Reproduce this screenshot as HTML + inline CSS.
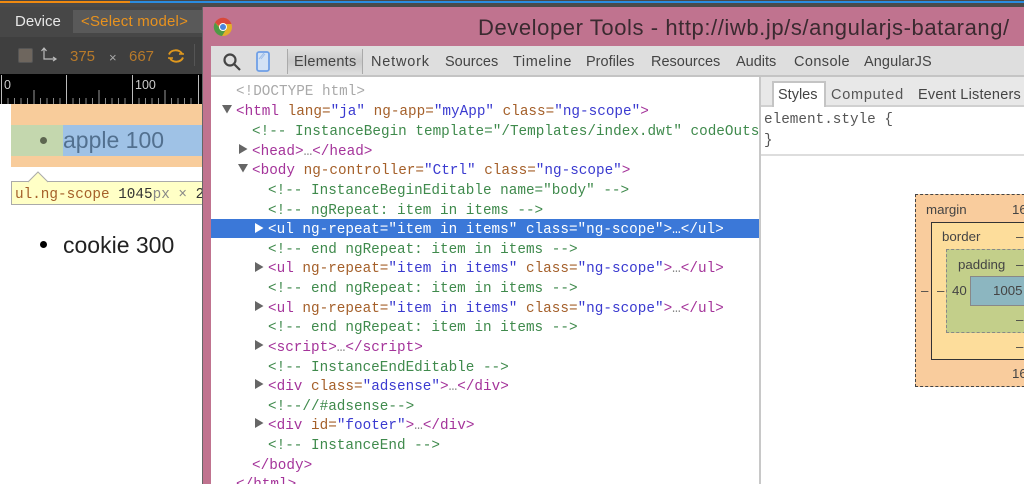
<!DOCTYPE html>
<html><head><meta charset="utf-8"><style>
html,body{margin:0;padding:0;width:1024px;height:484px;overflow:hidden;background:#fff}
body{position:relative;font-family:"Liberation Sans",sans-serif}
.a{position:absolute;white-space:pre}
.r{position:absolute;white-space:pre;font:14.33px/20px "Liberation Mono",monospace;color:#888}
.t{color:#a4339a}.n{color:#a5602a}.v{color:#3a3ad0}.c{color:#3f8a4c}.g{color:#a9a9a9}.k{color:#333}
.tab{position:absolute;top:53px;font-size:14.5px;line-height:18px;color:#444;white-space:pre}
.m{font-size:13.3px;color:#444;line-height:14px}
</style></head><body>
<div class="a" style="left:0;top:0;width:1024px;height:3px;background:#4a4a4a"></div>
<div class="a" style="left:0;top:0;width:202px;height:76px;background:#474747"></div>
<div class="a" style="left:0;top:1px;width:130px;height:2px;background:#f08a10"></div>
<div class="a" style="left:130px;top:1px;width:894px;height:2px;background:#2a8ce0"></div>
<div class="a" style="left:0;top:3px;width:1024px;height:4px;background:#4a4a4a"></div>
<div class="a" style="left:73px;top:10px;width:129px;height:23px;background:#595959"></div>
<div class="a" style="left:15px;top:13px;font-size:15px;line-height:18px;color:#e8e8e8">Device</div>
<div class="a" style="left:81px;top:13px;font-size:15px;line-height:18px;color:#e8921e;letter-spacing:.2px">&lt;Select model&gt;</div>
<div class="a" style="left:0;top:37px;width:202px;height:37px;background:#3f3f3f"></div>
<div class="a" style="left:18px;top:48px;width:13px;height:13px;background:#6e665e;border:1px solid #555;border-radius:2px"></div>
<svg class="a" style="left:40px;top:47px" width="18" height="18" viewBox="0 0 18 18" fill="none" stroke="#bbb" stroke-width="1.2"><path d="M4 1v11h11M1.500 4L4 1l2.500 3M13 10l3 2-3 2"/></svg>
<div class="a" style="left:70px;top:48px;font-size:15px;line-height:18px;color:#b87a2a">375</div>
<div class="a" style="left:109px;top:49px;font-size:13px;line-height:18px;color:#aaa">×</div>
<div class="a" style="left:129px;top:48px;font-size:15px;line-height:18px;color:#b87a2a">667</div>
<svg class="a" style="left:166px;top:47px" width="20" height="18" viewBox="0 0 20 18" fill="none" stroke="#e0981e" stroke-width="2"><path d="M3 7.500C5 2 14 2 16 7M17 10.500C15 16 6 16 4 11"/><path d="M13 7h5M2 11h5" stroke-width="1.500"/></svg>
<div class="a" style="left:194px;top:44px;width:1px;height:22px;background:#555"></div>
<!-- ruler -->
<svg class="a" style="left:0;top:74px" width="202" height="30"><rect width="202" height="30" fill="#000"/>
<path d="M1.500 1v29M66.500 1v29M132.500 1v29M198.500 1v29" stroke="#bbb"/>
<path d="M34 16v14M99 16v14M165 16v14" stroke="#999"/>
<path d="M8 24v6M14.500 24v6M21 24v6M27.500 24v6M40.500 24v6M47 24v6M53.500 24v6M60 24v6M73 24v6M79.500 24v6M86 24v6M92.500 24v6M105.500 24v6M112 24v6M118.500 24v6M125 24v6M139 24v6M145.500 24v6M152 24v6M158.500 24v6M171.500 24v6M178 24v6M184.500 24v6M191 24v6" stroke="#888"/>
<text x="4" y="15" font-family="Liberation Sans" font-size="12.500" fill="#ccc">0</text>
<text x="135" y="15" font-family="Liberation Sans" font-size="12.500" fill="#ccc">100</text></svg>
<!-- page -->
<div class="a" style="left:11px;top:104px;width:191px;height:63px;background:#f8cc9b"></div>
<div class="a" style="left:11px;top:125px;width:52px;height:31px;background:#c4d7ae"></div>
<div class="a" style="left:63px;top:125px;width:139px;height:31px;background:#9fc2e6"></div>
<div class="a" style="left:40px;top:137px;width:7px;height:7px;border-radius:50%;background:#5d6650"></div>
<div class="a" style="left:63px;top:126px;font-size:23px;line-height:28px;color:#52708f">apple 100</div>
<div class="a" style="left:11px;top:181px;width:191px;height:24px;background:#ffffc6;border:1px solid #aaa;border-right:0;box-sizing:border-box"></div>
<svg class="a" style="left:28px;top:171px" width="22" height="12"><path d="M0 11L10 1l10 10" fill="#ffffc6" stroke="#aaa"/></svg>
<div class="a" style="left:15px;top:186px;width:187px;overflow:hidden;font:14.33px/18px 'Liberation Mono',monospace;color:#a5602a">ul.ng-scope <span style="color:#333">1045</span><span style="color:#888">px × </span><span style="color:#333">2</span></div>
<div class="a" style="left:40px;top:241px;width:7px;height:7px;border-radius:50%;background:#000"></div>
<div class="a" style="left:63px;top:231px;font-size:23px;line-height:28px;color:#222">cookie 300</div>
<!-- window -->
<div class="a" style="left:202px;top:7px;width:822px;height:477px;background:#c0738f;border-left:1px solid #666;box-sizing:border-box"></div>
<svg class="a" style="left:213px;top:17px" width="20" height="20" viewBox="0 0 20 20"><circle cx="10" cy="10" r="9" fill="#e3ae2a"/><path d="M2 5.500A9 9 0 0 1 18.500 7H10A4 4 0 0 0 6 9z" fill="#d9483b"/><path d="M2 5.500A9 9 0 0 0 9 19l4-6.500A4 4 0 0 1 6 10z" fill="#4f9a46"/><circle cx="10" cy="10" r="4" fill="#fff"/><circle cx="10" cy="10" r="3" fill="#4a85dc"/></svg>
<div class="a" style="left:478px;top:15px;font-size:22px;line-height:26px;color:#3a2a30;letter-spacing:.58px">Developer Tools - http://iwb.jp/s/angularjs-batarang/</div>
<div class="a" style="left:211px;top:46px;width:813px;height:31px;background:#dedede;border-bottom:2px solid #c4c4c4;box-sizing:border-box"></div>
<svg class="a" style="left:222px;top:52px" width="20" height="20" viewBox="0 0 20 20" fill="none" stroke="#444" stroke-width="2.200"><circle cx="8" cy="8" r="5.500"/><path d="M12 12l6 6"/></svg>
<svg class="a" style="left:256px;top:51px" width="14" height="21"><rect x="1" y="1" width="12" height="19" rx="2" fill="#d3e2f5" stroke="#6f9fe6" stroke-width="1.800"/><path d="M3 8l5-6M5 8l4-5" stroke="#9dbde8"/></svg>
<div class="a" style="left:287px;top:49px;width:76px;height:25px;background:linear-gradient(#dedede,#c9c9c9 50%,#dedede);border-left:1px solid #aaa;border-right:1px solid #aaa;box-sizing:border-box"></div>
<div class="tab" style="left:294px;letter-spacing:.25px">Elements</div>
<div class="tab" style="left:371px;letter-spacing:.8px">Network</div>
<div class="tab" style="left:445px">Sources</div>
<div class="tab" style="left:513px;letter-spacing:.6px">Timeline</div>
<div class="tab" style="left:586px">Profiles</div>
<div class="tab" style="left:651px">Resources</div>
<div class="tab" style="left:736px">Audits</div>
<div class="tab" style="left:794px;letter-spacing:.4px">Console</div>
<div class="tab" style="left:864px;letter-spacing:.1px">AngularJS</div>
<!-- dom -->
<div class="a" style="left:211px;top:77px;width:548px;height:407px;background:#fff;overflow:hidden">
<div class="a" style="left:0;top:142px;width:548px;height:19px;background:#3b78d8"></div>
<svg class="a" style="left:0;top:0" width="60" height="360"><path d="M11 28h10l-5 8.500zM27 87h10l-5 8.500z" fill="#666"/><path d="M28 67v10l8.500-5z" fill="#666"/><path d="M44 146v10l8.500-5z" fill="#fff"/><path d="M44 185v10l8.500-5zM44 224v10l8.500-5zM44 263v10l8.500-5zM44 302v10l8.500-5zM44 341v10l8.500-5z" fill="#666"/></svg>
<div class="r" style="left:25px;top:5px"><span class="g">&lt;!DOCTYPE html&gt;</span></div>
<div class="r" style="left:25px;top:25px"><span class="t">&lt;html</span> <span class="n">lang=</span><span class="v">"ja"</span> <span class="n">ng-app=</span><span class="v">"myApp"</span> <span class="n">class=</span><span class="v">"ng-scope"</span><span class="t">&gt;</span></div>
<div class="r" style="left:41px;top:45px"><span class="c">&lt;!-- InstanceBegin template="/Templates/index.dwt" codeOutsideHTMLIsLocked="false"</span></div>
<div class="r" style="left:41px;top:65px"><span class="t">&lt;head&gt;</span>…<span class="t">&lt;/head&gt;</span></div>
<div class="r" style="left:41px;top:84px"><span class="t">&lt;body</span> <span class="n">ng-controller=</span><span class="v">"Ctrl"</span> <span class="n">class=</span><span class="v">"ng-scope"</span><span class="t">&gt;</span></div>
<div class="r" style="left:57px;top:104px"><span class="c">&lt;!-- InstanceBeginEditable name="body" --&gt;</span></div>
<div class="r" style="left:57px;top:124px"><span class="c">&lt;!-- ngRepeat: item in items --&gt;</span></div>
<div class="r" style="left:57px;top:143px;color:#fff">&lt;ul ng-repeat="item in items" class="ng-scope"&gt;…&lt;/ul&gt;</div>
<div class="r" style="left:57px;top:163px"><span class="c">&lt;!-- end ngRepeat: item in items --&gt;</span></div>
<div class="r" style="left:57px;top:182px"><span class="t">&lt;ul</span> <span class="n">ng-repeat=</span><span class="v">"item in items"</span> <span class="n">class=</span><span class="v">"ng-scope"</span><span class="t">&gt;</span>…<span class="t">&lt;/ul&gt;</span></div>
<div class="r" style="left:57px;top:202px"><span class="c">&lt;!-- end ngRepeat: item in items --&gt;</span></div>
<div class="r" style="left:57px;top:222px"><span class="t">&lt;ul</span> <span class="n">ng-repeat=</span><span class="v">"item in items"</span> <span class="n">class=</span><span class="v">"ng-scope"</span><span class="t">&gt;</span>…<span class="t">&lt;/ul&gt;</span></div>
<div class="r" style="left:57px;top:241px"><span class="c">&lt;!-- end ngRepeat: item in items --&gt;</span></div>
<div class="r" style="left:57px;top:261px"><span class="t">&lt;script&gt;</span>…<span class="t">&lt;/script&gt;</span></div>
<div class="r" style="left:57px;top:281px"><span class="c">&lt;!-- InstanceEndEditable --&gt;</span></div>
<div class="r" style="left:57px;top:300px"><span class="t">&lt;div</span> <span class="n">class=</span><span class="v">"adsense"</span><span class="t">&gt;</span>…<span class="t">&lt;/div&gt;</span></div>
<div class="r" style="left:57px;top:320px"><span class="c">&lt;!--//#adsense--&gt;</span></div>
<div class="r" style="left:57px;top:339px"><span class="t">&lt;div</span> <span class="n">id=</span><span class="v">"footer"</span><span class="t">&gt;</span>…<span class="t">&lt;/div&gt;</span></div>
<div class="r" style="left:57px;top:359px"><span class="c">&lt;!-- InstanceEnd --&gt;</span></div>
<div class="r" style="left:41px;top:379px"><span class="t">&lt;/body&gt;</span></div>
<div class="r" style="left:25px;top:398px"><span class="t">&lt;/html&gt;</span></div>
</div>
<!-- side panel -->
<div class="a" style="left:759px;top:77px;width:265px;height:407px;background:#fff;border-left:2px solid #c8c8c8;box-sizing:border-box"></div>
<div class="a" style="left:761px;top:77px;width:263px;height:30px;background:#e8e8e8;border-bottom:2px solid #d0d0d0;box-sizing:border-box"></div>
<div class="a" style="left:772px;top:81px;width:54px;height:26px;background:#fff;border:2px solid #c4c4c4;border-bottom:0;box-sizing:border-box"></div>
<div class="a" style="left:778px;top:86px;font-size:14.5px;line-height:18px;color:#444">Styles</div>
<div class="a" style="left:831px;top:86px;font-size:14.5px;line-height:18px;color:#555;letter-spacing:.75px">Computed</div>
<div class="a" style="left:918px;top:86px;font-size:14.5px;line-height:18px;color:#444;letter-spacing:.2px">Event Listeners</div>
<div class="a" style="left:764px;top:110px;font:14.33px/21px 'Liberation Mono',monospace;color:#555">element.style {
}</div>
<div class="a" style="left:761px;top:154px;width:263px;height:2px;background:#ddd"></div>
<!-- box model -->
<div class="a" style="left:915px;top:194px;width:120px;height:193px;background:#f9cc9d;border:1px dashed #444;box-sizing:border-box"></div>
<div class="a" style="left:931px;top:222px;width:100px;height:138px;background:#fddd9b;border:1px solid #333;box-sizing:border-box"></div>
<div class="a" style="left:946px;top:249px;width:90px;height:84px;background:#c3cf8a;border:1px dashed #888;box-sizing:border-box"></div>
<div class="a" style="left:970px;top:276px;width:60px;height:30px;background:#8cb6c0;border:1px solid #888;box-sizing:border-box"></div>
<div class="a m" style="left:926px;top:203px">margin</div>
<div class="a m" style="left:1012px;top:203px">16</div>
<div class="a m" style="left:942px;top:230px">border</div>
<div class="a m" style="left:1016px;top:230px">–</div>
<div class="a m" style="left:958px;top:258px">padding</div>
<div class="a m" style="left:1016px;top:258px">–</div>
<div class="a m" style="left:921px;top:284px">–</div>
<div class="a m" style="left:937px;top:284px">–</div>
<div class="a m" style="left:952px;top:284px">40</div>
<div class="a m" style="left:993px;top:284px">1005</div>
<div class="a m" style="left:1016px;top:313px">–</div>
<div class="a m" style="left:1016px;top:340px">–</div>
<div class="a m" style="left:1012px;top:367px">16</div>
</body></html>
